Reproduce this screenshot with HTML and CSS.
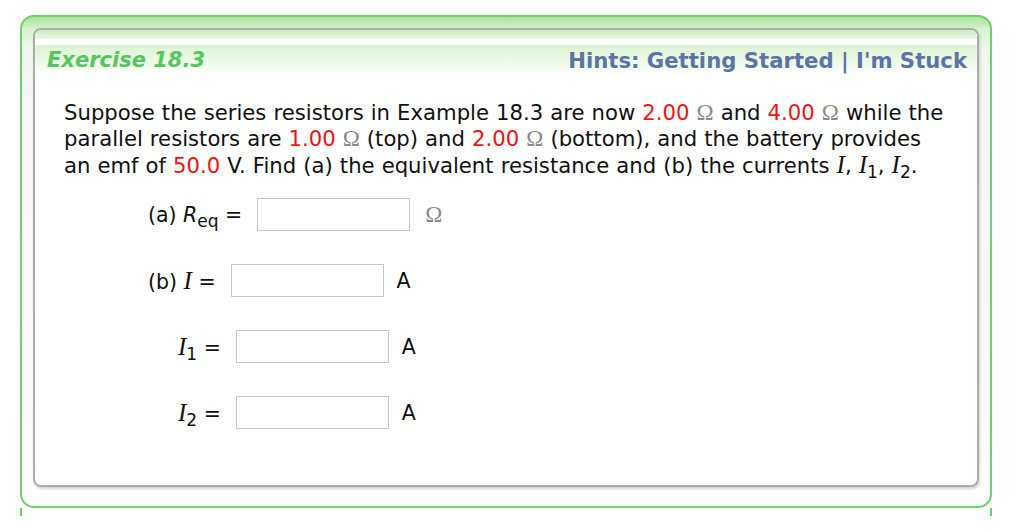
FILE: index.html
```html
<!DOCTYPE html>
<html>
<head>
<meta charset="utf-8">
<link rel="stylesheet" href="styles.css">
</head>
<body>
<div class="frame">
  <div class="card">
    <div class="topstrip"></div>
    <div class="header">
      <span class="title">Exercise 18.3</span>
      <span class="hints">Hints: Getting Started | I'm Stuck</span>
    </div>
    <div class="content">
      <p class="problem">Suppose the series resistors in Example 18.3 are now <span class="num">2.00</span> <span class="ohm">Ω</span> and <span class="num">4.00</span> <span class="ohm">Ω</span> while the<br>parallel resistors are <span class="num">1.00</span> <span class="ohm">Ω</span> (top) and <span class="num">2.00</span> <span class="ohm">Ω</span> (bottom), and the battery provides<br>an emf of <span class="num">50.0</span> V. Find (a) the equivalent resistance and (b) the currents <span class="var">I</span>, <span class="var">I</span><sub class="sub">1</sub>, <span class="var">I</span><sub class="sub">2</sub>.</p>
      <div class="row row-a">
        <span class="label">(a) <i class="r">R</i><sub class="sub">eq</sub> =</span>
        <span class="box"></span>
        <span class="unit ohm">Ω</span>
      </div>
      <div class="row row-b">
        <span class="label">(b) <span class="var">I</span> =</span>
        <span class="box"></span>
        <span class="unit">A</span>
      </div>
      <div class="row row-i">
        <span class="label"><span class="var">I</span><sub class="sub">1</sub> =</span>
        <span class="box"></span>
        <span class="unit">A</span>
      </div>
      <div class="row row-i">
        <span class="label"><span class="var">I</span><sub class="sub">2</sub> =</span>
        <span class="box"></span>
        <span class="unit">A</span>
      </div>
    </div>
  </div>
</div>
<div class="tail"></div>
</body>
</html>
```

FILE: styles.css
```css
html, body {
  margin: 0;
  padding: 0;
  background: #ffffff;
}

body {
  font-family: "DejaVu Sans", Verdana, sans-serif;
  color: #111;
}

.frame {
  box-sizing: border-box;
  margin: 15px 0 0 20px;
  width: 972px;
  height: 493px;
  border: 2px solid #6fd06f;
  border-radius: 14px;
  padding: 11px 11px 0 11px;
  background: linear-gradient(to bottom, #a9e29a 0px, #d6f2cd 12px, #eef8ea 30px, #f6f6f6 80px, #fbfbfb 400px, #ffffff 470px);
}

.card {
  box-sizing: border-box;
  width: 946px;
  height: 459px;
  border: 2px solid #adadad;
  border-radius: 8px;
  background: #ffffff;
  box-shadow: 1px 2px 3px rgba(0, 0, 0, 0.18);
  overflow: hidden;
}

.topstrip {
  height: 9px;
  margin-bottom: 6px;
  background: linear-gradient(to bottom, #cdeec3, #e9f8e4);
}

.header {
  height: 30px;
  display: flex;
  align-items: center;
  justify-content: space-between;
  padding: 0 10px 0 12px;
  background: linear-gradient(to bottom, #dcf3d3 0%, #eefaea 60%, #ffffff 100%);
  font-weight: bold;
  font-size: 21px;
}

.title {
  color: #56c65f;
  font-style: italic;
}

.hints {
  color: #5b74a8;
  font-size: 21.2px;
}

.content {
  padding: 25px 20px 0 29px;
}

.problem {
  margin: 0;
  font-size: 21.2px;
  line-height: 26px;
  color: #111;
  white-space: nowrap;
  word-spacing: 0.3px;
}

.num {
  color: #f21414;
}

.ohm {
  color: #8a8a8a;
  font-family: "Liberation Serif", "Times New Roman", serif;
  font-size: 23px;
}

.var {
  font-family: "Liberation Serif", "Times New Roman", serif;
  font-style: italic;
  font-size: 25px;
}

.sub {
  font-size: 17px;
  vertical-align: -5px;
  line-height: 0;
}

.r {
  font-style: italic;
}

.row {
  display: flex;
  align-items: center;
  height: 33px;
  margin-top: 33px;
  font-size: 20.5px;
}

.row-a {
  margin-top: 19px;
  padding-left: 84px;
}

.row-b {
  padding-left: 84px;
}

.row-i {
  padding-left: 114px;
}

.label {
  white-space: nowrap;
}

.box {
  box-sizing: border-box;
  width: 153px;
  height: 33px;
  margin-left: 15px;
  border: 1px solid #c8c8c8;
  background: #ffffff;
}

.unit {
  margin-left: 13px;
}

.row-a .unit {
  margin-left: 15px;
}

.tail {
  margin-left: 20px;
  width: 972px;
  height: 8px;
  box-sizing: border-box;
  border-left: 2px solid #6fd06f;
  border-right: 2px solid #6fd06f;
}
```
